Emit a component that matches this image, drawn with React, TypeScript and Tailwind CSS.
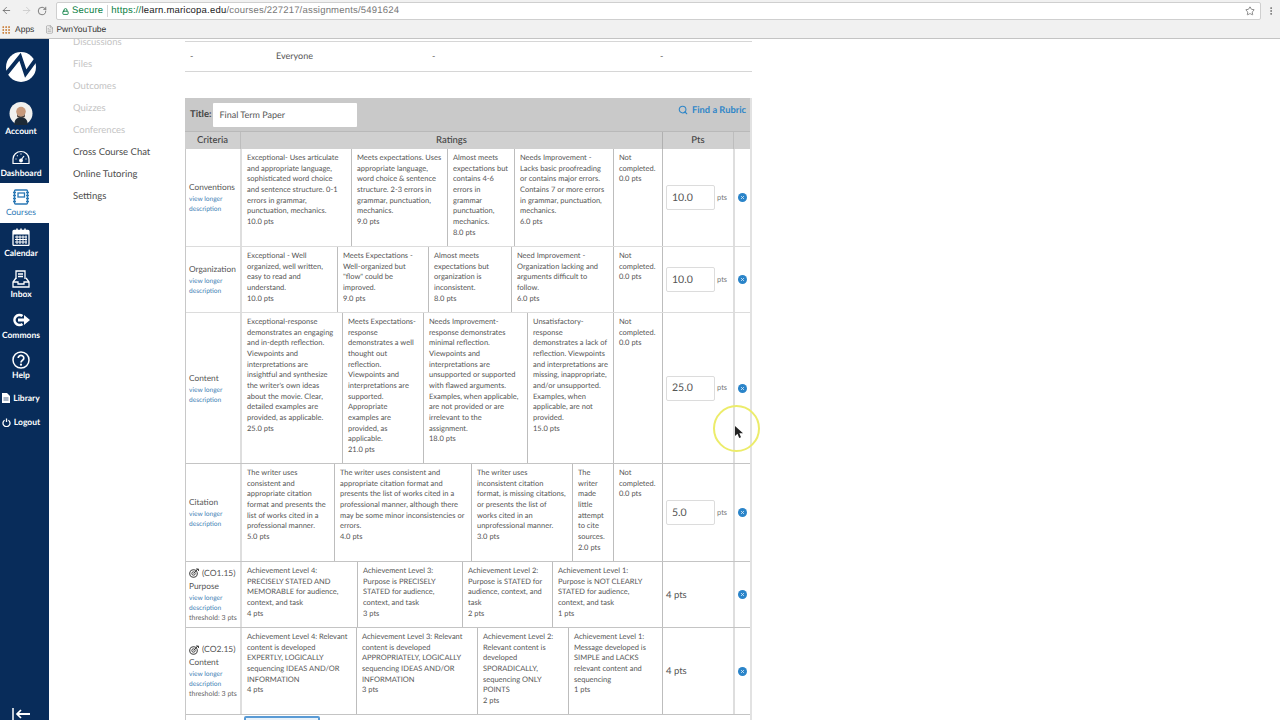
import { ArrowLeft, ArrowRight, RotateCw, Lock, Star, MoreVertical, FileText, Search, Grip } from "lucide-react";

type Rating = { w: number; text: string };
type Row = {
  name: string;
  outcome?: string;
  threshold?: string;
  h: number;
  ratings: Rating[];
  pts: string;
  input?: boolean;
  line: string;
};

const notDone = "Not\ncompleted.\n0.0 pts";

const rows: Row[] = [
  {
    name: "Conventions", h: 98, pts: "10.0", input: true, line: "border-[#dcdcdc]",
    ratings: [
      { w: 110, text: "Exceptional- Uses articulate\nand appropriate language,\nsophisticated word choice\nand sentence structure. 0-1\nerrors in grammar,\npunctuation, mechanics.\n10.0 pts" },
      { w: 96, text: "Meets expectations. Uses\nappropriate language,\nword choice & sentence\nstructure. 2-3 errors in\ngrammar, punctuation,\nmechanics.\n9.0 pts" },
      { w: 67, text: "Almost meets\nexpectations but\ncontains 4-6\nerrors in\ngrammar\npunctuation,\nmechanics.\n8.0 pts" },
      { w: 99, text: "Needs Improvement -\nLacks basic proofreading\nor contains major errors.\nContains 7 or more errors\nin grammar, punctuation,\nmechanics.\n6.0 pts" },
      { w: 49, text: notDone },
    ],
  },
  {
    name: "Organization", h: 66, pts: "10.0", input: true, line: "border-[#dcdcdc]",
    ratings: [
      { w: 96, text: "Exceptional - Well\norganized, well written,\neasy to read and\nunderstand.\n10.0 pts" },
      { w: 91, text: "Meets Expectations -\nWell-organized but\n\"flow\" could be\nimproved.\n9.0 pts" },
      { w: 83, text: "Almost meets\nexpectations but\norganization is\ninconsistent.\n8.0 pts" },
      { w: 102, text: "Need Improvement -\nOrganization lacking and\narguments difficult to\nfollow.\n6.0 pts" },
      { w: 49, text: notDone },
    ],
  },
  {
    name: "Content", h: 151, pts: "25.0", input: true, line: "border-[#c4c4c4]",
    ratings: [
      { w: 101, text: "Exceptional-response\ndemonstrates an engaging\nand in-depth reflection.\nViewpoints and\ninterpretations are\ninsightful and synthesize\nthe writer's own ideas\nabout the movie. Clear,\ndetailed examples are\nprovided, as applicable.\n25.0 pts" },
      { w: 81, text: "Meets Expectations-\nresponse\ndemonstrates a well\nthought out\nreflection.\nViewpoints and\ninterpretations are\nsupported.\nAppropriate\nexamples are\nprovided, as\napplicable.\n21.0 pts" },
      { w: 104, text: "Needs Improvement-\nresponse demonstrates\nminimal reflection.\nViewpoints and\ninterpretations are\nunsupported or supported\nwith flawed arguments.\nExamples, when applicable,\nare not provided or are\nirrelevant to the\nassignment.\n18.0 pts" },
      { w: 86, text: "Unsatisfactory-\nresponse\ndemonstrates a lack of\nreflection. Viewpoints\nand interpretations are\nmissing, inappropriate,\nand/or unsupported.\nExamples, when\napplicable, are not\nprovided.\n15.0 pts" },
      { w: 49, text: notDone },
    ],
  },
  {
    name: "Citation", h: 98, pts: "5.0", input: true, line: "border-[#c4c4c4]",
    ratings: [
      { w: 93, text: "The writer uses\nconsistent and\nappropriate citation\nformat and presents the\nlist of works cited in a\nprofessional manner.\n5.0 pts" },
      { w: 137, text: "The writer uses consistent and\nappropriate citation format and\npresents the list of works cited in a\nprofessional manner, although there\nmay be some minor inconsistencies or\nerrors.\n4.0 pts" },
      { w: 101, text: "The writer uses\ninconsistent citation\nformat, is missing citations,\nor presents the list of\nworks cited in an\nunprofessional manner.\n3.0 pts" },
      { w: 41, text: "The\nwriter\nmade\nlittle\nattempt\nto cite\nsources.\n2.0 pts" },
      { w: 49, text: notDone },
    ],
  },
  {
    name: "Purpose", outcome: "(CO1.15)", threshold: "threshold: 3 pts", h: 66, pts: "4 pts", line: "border-[#c4c4c4]",
    ratings: [
      { w: 116, text: "Achievement Level 4:\nPRECISELY STATED AND\nMEMORABLE for audience,\ncontext, and task\n4 pts" },
      { w: 105, text: "Achievement Level 3:\nPurpose is PRECISELY\nSTATED for audience,\ncontext, and task\n3 pts" },
      { w: 90, text: "Achievement Level 2:\nPurpose is STATED for\naudience, context, and\ntask\n2 pts" },
      { w: 110, text: "Achievement Level 1:\nPurpose is NOT CLEARLY\nSTATED for audience,\ncontext, and task\n1 pts" },
    ],
  },
  {
    name: "Content", outcome: "(CO2.15)", threshold: "threshold: 3 pts", h: 87, pts: "4 pts", line: "border-[#c4c4c4]",
    ratings: [
      { w: 115, text: "Achievement Level 4: Relevant\ncontent is developed\nEXPERTLY, LOGICALLY\nsequencing IDEAS AND/OR\nINFORMATION\n4 pts" },
      { w: 121, text: "Achievement Level 3: Relevant\ncontent is developed\nAPPROPRIATELY, LOGICALLY\nsequencing IDEAS AND/OR\nINFORMATION\n3 pts" },
      { w: 91, text: "Achievement Level 2:\nRelevant content is\ndeveloped\nSPORADICALLY,\nsequencing ONLY\nPOINTS\n2 pts" },
      { w: 94, text: "Achievement Level 1:\nMessage developed is\nSIMPLE and LACKS\nrelevant content and\nsequencing\n1 pts" },
    ],
  },
];

const navItems = [
  { label: "Discussions", off: true },
  { label: "Files", off: true },
  { label: "Outcomes", off: true },
  { label: "Quizzes", off: true },
  { label: "Conferences", off: true },
  { label: "Cross Course Chat" },
  { label: "Online Tutoring" },
  { label: "Settings" },
];

const Logo = () => (
  <svg width="30" height="30" viewBox="0 0 32 32">
    <circle cx="16" cy="16" r="16" fill="#fff" />
    <path d="M-1 25 L15 5 L21 23 L34 5" fill="none" stroke="#082c5a" strokeWidth="4.2" strokeLinejoin="miter" />
  </svg>
);

const Avatar = () => (
  <svg width="24" height="24" viewBox="0 0 24 24">
    <circle cx="12" cy="12" r="12" fill="#f1f1ef" />
    <circle cx="12" cy="10" r="5" fill="#c79a7c" />
    <path d="M8 12c0 4 8 4 8 0v3c0 2-8 2-8 0z" fill="#4a3a30" />
    <path d="M5 24c0-6 3-8 7-8s7 2 7 8z" fill="#1d2a36" />
  </svg>
);

const Gauge = () => (
  <svg width="18" height="15" viewBox="0 0 18 15" fill="none" stroke="#fff" strokeWidth="1.2">
    <path d="M1 13.5V9a8 7.5 0 0 1 16 0v4.500z" />
    <path d="M9 10l3-4M3.500 9h1M13.500 9h1M5 5.500l.7.7M9 3.500v1" />
    <circle cx="9" cy="10.500" r="1.300" fill="#fff" />
  </svg>
);

const Book = ({ color }: { color: string }) => (
  <svg width="18" height="16" viewBox="0 0 18 16" fill="none" stroke={color} strokeWidth="1.3">
    <rect x="2.500" y="1" width="13" height="14" rx="1" />
    <rect x="6" y="4" width="6.500" height="4" />
    <path d="M1 3.500h3M1 6.500h3M1 9.500h3M1 12.500h3M14 3.500h3M14 6.500h3M14 9.500h3M14 12.500h3" />
  </svg>
);

const Calendar = () => (
  <svg width="18" height="18" viewBox="0 0 18 18">
    <rect x="1" y="2.500" width="16" height="15" rx="1" fill="none" stroke="#fff" strokeWidth="1.300" />
    <rect x="1" y="2.500" width="16" height="4" fill="#fff" />
    <path d="M5 .5v3M9 .5v3M13 .5v3" stroke="#fff" strokeWidth="1.500" />
    <path d="M3 9h12M3 11.500h12M3 14h12M5 7.500v8.500M8 7.500v8.500M11 7.500v8.500M14 7.500v8.500" stroke="#fff" strokeWidth="1" />
  </svg>
);

const Inbox = () => (
  <svg width="18" height="18" viewBox="0 0 18 18" fill="none" stroke="#fff" strokeWidth="1.300">
    <path d="M4 9V1h9v8" />
    <path d="M6 4h5M6 6.500h5" />
    <path d="M4 8L1 12v5h16v-5l-3-4" />
    <path d="M1 12h5v2h6v-2h5" />
  </svg>
);

const Commons = () => (
  <svg width="18" height="14" viewBox="0 0 18 14" fill="none">
    <path d="M10.500 3A5 5 0 1 0 10.500 11" stroke="#fff" strokeWidth="2.600" />
    <path d="M6 5.500h6V2l6 5-6 5V8.500H6z" fill="#fff" />
  </svg>
);

const Help = () => (
  <svg width="18" height="18" viewBox="0 0 18 18" fill="none" stroke="#fff">
    <circle cx="9" cy="9" r="8" strokeWidth="1.500" />
    <path d="M6.200 7a2.800 2.600 0 1 1 4.300 2.200C9.500 9.900 9 10.300 9 11.500" strokeWidth="1.700" />
    <circle cx="9" cy="13.700" r="1.100" fill="#fff" stroke="none" />
  </svg>
);

const Doc = () => (
  <svg width="8" height="10" viewBox="0 0 8 10">
    <path d="M0 0h5l3 3v7H0z" fill="#fff" />
    <path d="M1.500 5h5M1.500 7h5" stroke="#082c5a" strokeWidth=".7" />
  </svg>
);

const Power = () => (
  <svg width="9" height="9" viewBox="0 0 9 9" fill="none" stroke="#fff" strokeWidth="1.300">
    <path d="M2.600 2.200a3.500 3.500 0 1 0 3.800 0M4.500 .5v3.500" />
  </svg>
);

const Collapse = () => (
  <svg width="18" height="12" viewBox="0 0 18 12" fill="none" stroke="#fff">
    <path d="M1 0v12" strokeWidth="1.500" />
    <path d="M5 6h13" strokeWidth="2" />
    <path d="M9 2L5 6l4 4" strokeWidth="1.700" />
  </svg>
);

const Target = () => (
  <svg width="10" height="10" viewBox="0 0 10 10" fill="none" stroke="#444" className="mr-[3px] shrink-0">
    <circle cx="4.500" cy="5.500" r="3.800" strokeWidth="1.100" />
    <circle cx="4.500" cy="5.500" r="1.700" strokeWidth="1" />
    <path d="M4.500 5.500L9 1M7 1h2.500v2" strokeWidth="1" />
  </svg>
);

const Remove = () => (
  <svg width="9" height="9" viewBox="0 0 9 9">
    <circle cx="4.500" cy="4.500" r="4.500" fill="#2a84c9" />
    <path d="M3 3l3 3M6 3L3 6" stroke="#dceaf6" strokeWidth=".8" />
  </svg>
);

const SideItem = ({ icon, label, cls, active }: { icon: React.ReactNode; label: string; cls: string; active?: boolean }) => (
  <div className={`${cls} pr-[7px] flex flex-col items-center justify-center ${active ? "bg-white text-[#2b78b5]" : "text-white"}`}>
    {icon}
    <span className={`text-[8.5px] leading-[11px] whitespace-nowrap ${active ? "font-normal" : "font-bold"}`}>{label}</span>
  </div>
);

const Sidebar = () => (
  <div className="w-[49px] shrink-0 bg-[#082c5a] flex flex-col font-['Lato',sans-serif]">
    <div className="h-[63px] pr-[7px] pb-[7px] flex items-center justify-center">
      <Logo />
    </div>
    <SideItem cls="h-[41px] gap-[1px] pb-[6px]" icon={<Avatar />} label="Account" />
    <SideItem cls="h-[40px] gap-[3px] pt-[3px]" icon={<Gauge />} label="Dashboard" />
    <SideItem cls="h-[40px] gap-[2px] pt-[1px]" active icon={<Book color="#2b78b5" />} label="Courses" />
    <SideItem cls="h-[41px] gap-[2px]" icon={<Calendar />} label="Calendar" />
    <SideItem cls="h-[41px] gap-[1px] pt-[1px]" icon={<Inbox />} label="Inbox" />
    <SideItem cls="h-[41px] gap-[3px] pt-[3px]" icon={<Commons />} label="Commons" />
    <SideItem cls="h-[40px] gap-[1px]" icon={<Help />} label="Help" />
    <div className="h-[24px] pr-[7px] flex items-center justify-center gap-[3px] text-white text-[8.5px] font-bold">
      <Doc />
      Library
    </div>
    <div className="h-[25px] pr-[7px] flex items-center justify-center gap-[3px] text-white text-[8.5px] font-bold">
      <Power />
      Logout
    </div>
    <div className="mt-auto pr-[7px] h-[12px] flex justify-center">
      <Collapse />
    </div>
  </div>
);

const BrowserBar = () => (
  <div className="h-[39px] shrink-0 bg-[#f1f1f1] border-b border-[#c4c4c4] font-['Liberation_Sans',sans-serif]">
    <div className="h-[21px] flex items-center">
      <div className="w-[56px] flex items-center pl-[1px] text-[#5a5a5a]">
        <ArrowLeft size={11} strokeWidth={1.6} />
        <ArrowRight size={11} strokeWidth={1.6} className="ml-[9px] text-[#c4c4c4]" />
        <RotateCw size={10} strokeWidth={1.8} className="ml-[5px]" />
      </div>
      <div className="w-[1205px] h-[18px] pt-[2px] bg-white border border-[#cfcfcf] rounded-[2px] flex items-center text-[9.5px] tracking-[0.2px]">
        <Lock size={7} strokeWidth={3} className="ml-[5px] text-[#0b8043]" />
        <span className="ml-[3px] text-[#0b8043]">Secure</span>
        <span className="ml-[4px] w-px h-[12px] -mt-[2px] bg-[#d4d4d4]" />
        <span className="ml-[3px] text-[#0b8043]">https://</span>
        <span className="text-[#222]">learn.maricopa.edu</span>
        <span className="text-[#777]">/courses/227217/assignments/5491624</span>
        <Star size={10} strokeWidth={1.6} className="ml-auto mr-[5px] -mt-[2px] text-[#555]" />
      </div>
      <MoreVertical size={10} strokeWidth={2} className="ml-[5px] text-[#666]" />
    </div>
    <div className="h-[17px] flex items-center pl-[1px] text-[8.5px] text-[#333]">
      <Grip size={10} strokeWidth={2.4} className="text-[#c9772b]" />
      <span className="ml-[4px]">Apps</span>
      <FileText size={9} strokeWidth={1.2} className="ml-[11px] text-[#777]" />
      <span className="ml-[2px]">PwnYouTube</span>
    </div>
  </div>
);

const CourseNav = () => (
  <div className="w-[136px] shrink-0 pl-[24px] -mt-[7px] text-[9.5px] font-['Lato',sans-serif]">
    {navItems.map((item) => (
      <div key={item.label} className={`h-[22px] flex items-center ${item.off ? "text-[#c4c4c4]" : "text-[#4c4c4c]"}`}>
        {item.label}
      </div>
    ))}
  </div>
);

const RubricRow = ({ row }: { row: Row }) => (
  <div className={`flex border-b ${row.line}`} style={{ height: row.h }}>
    <div className="w-[56px] shrink-0 border-r-2 border-[#dedede] pl-[3px] flex flex-col justify-center text-[#555]">
      {row.outcome && (
        <div className="flex items-center text-[8.5px] leading-[13px] whitespace-nowrap">
          <Target />
          {row.outcome}
        </div>
      )}
      <div className="text-[8.3px] leading-[13px]">{row.name}</div>
      <div className="text-[6.6px] leading-[10px] text-[#3f7fb5]">
        view longer
        <br />
        description
      </div>
      {row.threshold && <div className="text-[7px] leading-[10px] text-[#666] whitespace-nowrap">{row.threshold}</div>}
    </div>
    <div className="w-[420px] shrink-0 flex">
      {row.ratings.map((r, i) =>
        i < row.ratings.length - 1 ? (
          <div
            key={i}
            className="shrink-0 pl-[5px] pt-[4px] text-[7.5px] leading-[10.67px] text-[#555] whitespace-pre border-r border-[#bdbdbd]"
            style={{ width: r.w }}
          >
            {r.text}
          </div>
        ) : (
          <div key={i} className="flex-1 pl-[5px] pt-[4px] text-[7.5px] leading-[10.67px] text-[#555] whitespace-pre">
            {r.text}
          </div>
        ),
      )}
    </div>
    <div className="w-[71px] shrink-0 border-l border-[#bdbdbd] pl-[3px] flex items-center">
      {row.input ? (
        <>
          <div className="w-[49px] h-[25px] bg-white border border-[#dcdcdc] rounded-[2px] pl-[5px] pt-[2px] flex items-center text-[10.5px] text-[#555]">
            {row.pts}
          </div>
          <span className="ml-[2px] text-[7.5px] text-[#777]">pts</span>
        </>
      ) : (
        <span className="pt-[3px] text-[9.5px] text-[#555]">{row.pts}</span>
      )}
    </div>
    <div className="flex-1 border-l-2 border-[#dedede] flex items-center justify-center">
      <Remove />
    </div>
  </div>
);

const Rubric = () => (
  <div className="w-[567px] mt-[26px] border-r-2 border-[#e2e2e2]">
    <div className="h-[33px] bg-[#c9c9c9] flex items-center pl-[5px] pr-[4px]">
      <span className="pt-[2px] text-[9.5px] font-bold text-[#444]">Title:</span>
      <div className="ml-[2px] w-[144px] h-[24px] bg-white rounded-[1px] pl-[6px] pt-[1px] flex items-center text-[9px] text-[#555]">
        Final Term Paper
      </div>
      <div className="ml-auto self-start mt-[5px] flex items-center gap-[4px] text-[#2f86c8] text-[9.3px] font-bold">
        <Search size={10} strokeWidth={2.6} />
        Find a Rubric
      </div>
    </div>
    <div className="h-[18px] bg-[#d0d0d0] border-t border-[#b9b9b9] flex items-center text-[9.5px] text-[#444] font-medium">
      <div className="w-[56px] h-full pt-[1px] flex items-center justify-center border-r border-[#bdbdbd]">Criteria</div>
      <div className="w-[421px] h-full pt-[1px] flex items-center justify-center">Ratings</div>
      <div className="w-[71px] h-full pt-[1px] flex items-center justify-center border-l border-[#b0b0b0]">Pts</div>
      <div className="flex-1 h-full border-l border-[#bdbdbd]" />
    </div>
    <div className="border-l border-[#c8c8c8]">
      {rows.map((row, i) => (
        <RubricRow key={i} row={row} />
      ))}
      <div className="h-[20px] pl-[58px] pt-[1px]">
        <div className="w-[76px] h-[20px] border-2 border-[#5a9bd5] rounded-[2px] bg-[#eaf3fb]" />
      </div>
    </div>
  </div>
);

const TopTable = () => (
  <div className="w-[567px] -mt-[1px]">
    <div className="h-[31px] pb-[2px] border-t border-b border-[#d6d6d6] flex items-center text-[9px] text-[#555]">
      <span className="w-[91px] pl-[5px]">-</span>
      <span className="w-[156px]">Everyone</span>
      <span className="w-[228px]">-</span>
      <span>-</span>
    </div>
  </div>
);

export default function App() {
  return (
    <div className="relative h-[720px] w-[1280px] overflow-hidden bg-white flex flex-col [text-rendering:geometricPrecision]">
      <BrowserBar />
      <div className="flex flex-1 min-h-0 overflow-hidden">
        <Sidebar />
        <CourseNav />
        <div className="flex-1 pt-[3px] font-['Lato',sans-serif]">
          <TopTable />
          <Rubric />
        </div>
      </div>
      {/* cursor highlight from the screen recording */}
      <div className="absolute left-[713px] top-[405px] w-[47px] h-[47px] rounded-full border-2 border-[#ecec6a]" />
      <svg className="absolute left-[735px] top-[426px]" width="8" height="12" viewBox="0 0 8 12">
        <path d="M0 0v10l2.500-2.200L4.200 12l1.800-.8-1.700-4H8z" fill="#222" />
      </svg>
    </div>
  );
}
